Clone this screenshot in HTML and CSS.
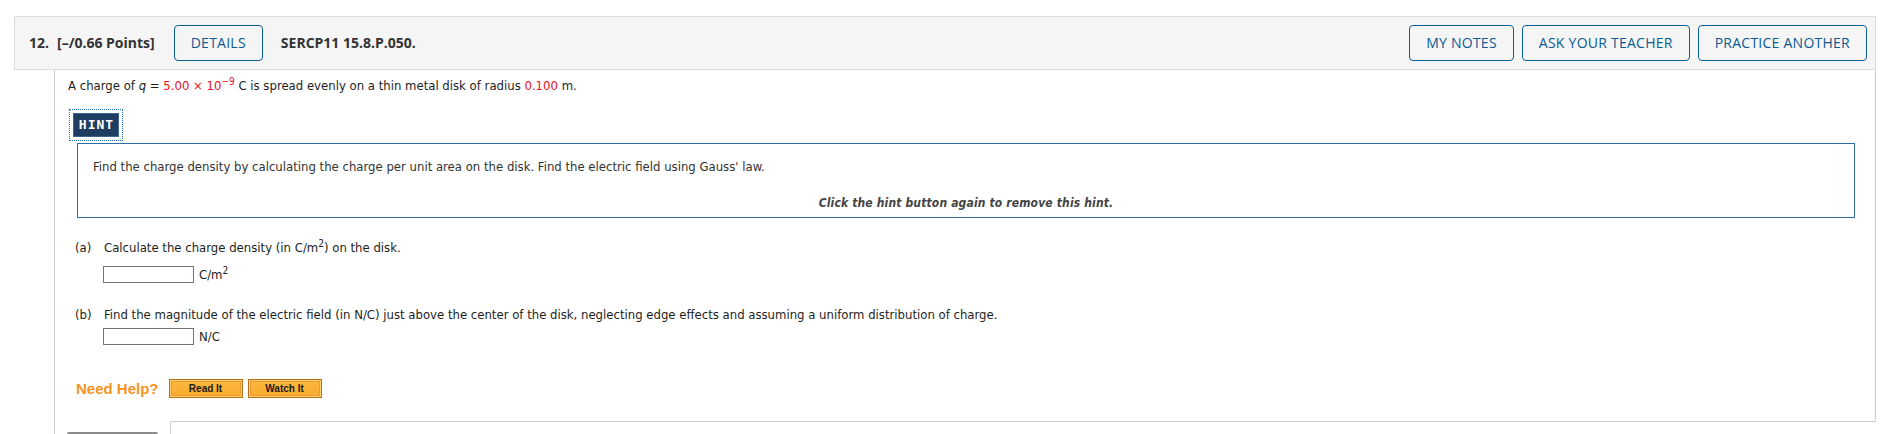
FILE: index.html
```html
<!DOCTYPE html>
<html lang="en">
<head>
<meta charset="utf-8">
<title>Question 12</title>
<link rel="stylesheet" href="styles.css">
</head>
<body>
<div class="question">
  <div class="q-header">
    <span class="q-num">12.</span>
    <span class="q-points">[–/0.66 Points]</span>
    <button class="hbtn hbtn-details">DETAILS</button>
    <span class="q-code">SERCP11 15.8.P.050.</span>
    <div class="hbtn-group">
      <button class="hbtn">MY NOTES</button>
      <button class="hbtn">ASK YOUR TEACHER</button>
      <button class="hbtn">PRACTICE ANOTHER</button>
    </div>
  </div>
  <div class="q-main">
    <div class="q-body">
      <p class="prompt">A charge of <i>q</i> = <span class="val">5.00 × 10<sup>−9</sup></span> C is spread evenly on a thin metal disk of radius <span class="val">0.100</span> m.</p>
      <button class="hint-btn">HINT</button>
      <div class="hint-box">
        <p class="hint-text">Find the charge density by calculating the charge per unit area on the disk. Find the electric field using Gauss' law.</p>
        <p class="hint-note">Click the hint button again to remove this hint.</p>
      </div>
      <div class="part part-a">
        <span class="plabel">(a)</span>
        <span class="ptext">Calculate the charge density (in C/m<sup>2</sup>) on the disk.</span>
      </div>
      <div class="answer answer-a">
        <span class="ans-box"></span>
        <span class="unit">C/m<sup>2</sup></span>
      </div>
      <div class="part part-b">
        <span class="plabel">(b)</span>
        <span class="ptext">Find the magnitude of the electric field (in N/C) just above the center of the disk, neglecting edge effects and assuming a uniform distribution of charge.</span>
      </div>
      <div class="answer answer-b">
        <span class="ans-box"></span>
        <span class="unit">N/C</span>
      </div>
      <div class="need-help">
        <span class="nh-label">Need Help?</span>
        <button class="nh-btn">Read It</button>
        <button class="nh-btn">Watch It</button>
      </div>
    </div>
    <div class="q-footer">
      <div class="footer-btn"></div>
      <div class="footer-panel"></div>
    </div>
  </div>
</div>
</body>
</html>
```
FILE: styles.css
```css
html, body {
  margin: 0;
  padding: 0;
  background: #ffffff;
  overflow: hidden;
}

body {
  font-family: "DejaVu Sans Condensed", "DejaVu Sans", sans-serif;
  font-size: 13px;
  line-height: 16px;
  color: #1e1e1e;
}

p {
  margin: 0;
}

button {
  font: inherit;
  margin: 0;
  cursor: pointer;
}

/* ---------- header ---------- */
.q-header {
  margin: 16px 6px 0 14px;
  height: 52px;
  border: 1px solid #dcdcdc;
  background: #f5f5f5;
  display: flex;
  align-items: center;
  padding-left: 14px;
  font-family: "Open Sans", sans-serif;
  font-size: 14px;
  line-height: 20px;
  color: #333333;
}

.q-num {
  font-weight: 700;
  margin-right: 8px;
}

.q-points {
  font-weight: 700;
}

.q-code {
  font-weight: 700;
  margin-left: 18px;
}

.hbtn {
  height: 36px;
  padding: 0 16px;
  border: 1px solid #0b5f97;
  border-radius: 4px;
  background: transparent;
  color: #0b5a92;
  font-family: "Open Sans", sans-serif;
  font-size: 14px;
  font-weight: 500;
  letter-spacing: 0.25px;
}

.hbtn-details {
  margin-left: 19px;
}

.hbtn-group {
  margin-left: auto;
  margin-right: 8px;
  display: flex;
  gap: 8px;
}

/* ---------- body ---------- */
.q-main {
  margin: 0 6px 0 54px;
  border-left: 1px solid #cccccc;
}

.q-body {
  border-right: 1px solid #cccccc;
  border-bottom-right-radius: 3px;
  padding: 8px 0 23px 13px;
}

.val {
  color: #e8111a;
}

sup {
  font-size: 10px;
  line-height: 0;
  vertical-align: 5px;
}

.hint-btn {
  display: flex;
  align-items: center;
  justify-content: center;
  margin: 19px 0 0 5px;
  width: 46px;
  height: 24px;
  padding: 0 0 0 1px;
  box-sizing: border-box;
  background: #1f3d60;
  border: 1px solid #3d6792;
  outline: 1px dotted #1f74c9;
  outline-offset: 3px;
  color: #ffffff;
  font-family: "DejaVu Sans Mono", monospace;
  font-weight: bold;
  font-size: 13px;
  letter-spacing: 1px;
}

.hint-box {
  margin: 6px 20px 0 9px;
  border: 1px solid #2f6aa3;
  padding: 15px 15px 7px;
}

.hint-text {
  color: #333333;
}

.hint-note {
  margin-top: 21px;
  text-align: center;
  font-size: 12px;
  line-height: 14px;
  letter-spacing: 0.15px;
  font-weight: bold;
  font-style: italic;
  color: #444444;
}

.part {
  display: flex;
  margin-left: 7px;
}

.part-a {
  margin-top: 22px;
}

.part-b {
  margin-top: 24px;
}

.plabel {
  width: 29px;
  flex: none;
}

.answer {
  display: flex;
  align-items: center;
  margin-left: 35px;
}

.answer-a {
  margin-top: 10px;
}

.answer-b {
  margin-top: 5px;
}

.ans-box {
  width: 91px;
  height: 17px;
  box-sizing: border-box;
  border: 1px solid #767676;
  background: #ffffff;
}

.unit {
  margin-left: 5px;
}

.need-help {
  display: flex;
  align-items: center;
  margin: 34px 0 0 8px;
}

.nh-label {
  font-family: "Liberation Sans", Arial, sans-serif;
  font-weight: bold;
  font-size: 15px;
  line-height: 19px;
  color: #f7941d;
  margin-right: 10px;
}

.nh-btn {
  width: 74px;
  height: 19px;
  padding: 0;
  box-sizing: border-box;
  border: 1px solid #b9701a;
  background: linear-gradient(#fdb940, #f9a82c);
  box-shadow: inset 0 0 0 1px #ffd070, inset 0 0 0 2px #e99b34;
  font-family: "Liberation Sans", Arial, sans-serif;
  font-weight: bold;
  font-size: 10px;
  color: #1a1a1a;
}

.nh-btn + .nh-btn {
  margin-left: 5px;
}

/* ---------- footer ---------- */
.q-footer {
  display: flex;
  height: 13px;
  overflow: hidden;
}

.footer-btn {
  flex: none;
  width: 91px;
  height: 30px;
  margin: 11px 0 0 12px;
  box-sizing: border-box;
  border: 1px solid #8a8a8a;
  border-top-width: 2px;
  border-radius: 2px;
  background: #f0f0f0;
}

.footer-panel {
  flex: 1;
  margin-left: 12px;
  height: 40px;
  border-top: 1px solid #cccccc;
  border-left: 1px solid #cccccc;
}
```
